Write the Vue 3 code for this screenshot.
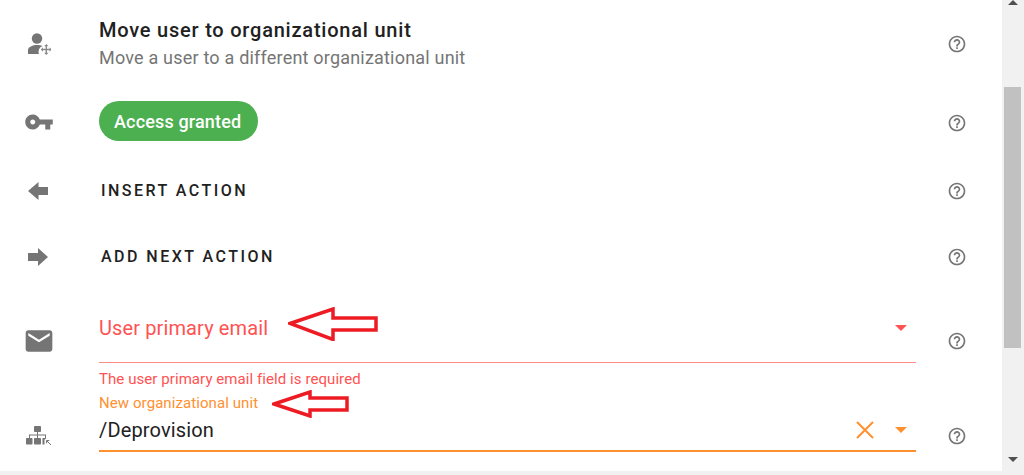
<script setup>
const helpPath = 'M11 18h2v-2h-2v2zm1-16C6.480 2 2 6.480 2 12s4.480 10 10 10 10-4.480 10-10S17.520 2 12 2zm0 18c-4.410 0-8-3.590-8-8s3.590-8 8-8 8 3.590 8 8-3.590 8-8 8zm0-14c-2.210 0-4 1.790-4 4h2c0-1.100.9-2 2-2s2 .9 2 2c0 2-3 1.750-3 5h2c0-2.250 3-2.500 3-5 0-2.210-1.790-4-4-4z'
</script>

<template>
  <div class="page">
    <main class="content">
      <section class="row r1">
        <div class="ic">
          <svg width="24" height="24" viewBox="0 0 24 24">
            <circle cx="10" cy="6.500" r="5.200" fill="#757575" />
            <path d="M1 22v-4C1 15 6 13 10 13c2.200 0 4 .4 5.500 1a6 6 0 0 0-3.500 8z" fill="#757575" />
            <path d="M19.300 12l2.200 2.200h-1.500v2.600h2.600v-1.500l2.200 2.200-2.200 2.200v-1.500H20v2.600h1.500l-2.200 2.200-2.200-2.200h1.500v-2.600H16v1.500l-2.200-2.200 2.200-2.200v1.500h2.600v-2.600h-1.500z" fill="#8a8a8a" />
          </svg>
        </div>
        <div class="main">
          <div class="title">Move user to organizational unit</div>
          <div class="sub">Move a user to a different organizational unit</div>
        </div>
        <div class="help"><svg width="20" height="20" viewBox="0 0 24 24"><path fill="#757575" :d="helpPath" /></svg></div>
      </section>

      <section class="row r2">
        <div class="ic key">
          <svg width="30" height="30" viewBox="0 0 24 24"><path fill="#757575" d="M12.650 10C11.830 7.670 9.610 6 7 6c-3.310 0-6 2.690-6 6s2.690 6 6 6c2.610 0 4.830-1.670 5.650-4H17v4h4v-4h2v-4H12.650zM7 14c-1.100 0-2-.9-2-2s.9-2 2-2 2 .9 2 2-.9 2-2 2z"/></svg>
        </div>
        <div class="main"><span class="chip">Access granted</span></div>
        <div class="help"><svg width="20" height="20" viewBox="0 0 24 24"><path fill="#757575" :d="helpPath" /></svg></div>
      </section>

      <section class="row r3">
        <div class="ic arr">
          <svg width="24" height="24" viewBox="0 0 24 24"><path fill="#757575" d="M2 12L12.500 3v5H22v8h-9.500v5z"/></svg>
        </div>
        <div class="main"><span class="btn">INSERT ACTION</span></div>
        <div class="help"><svg width="20" height="20" viewBox="0 0 24 24"><path fill="#757575" :d="helpPath" /></svg></div>
      </section>

      <section class="row r4">
        <div class="ic arr">
          <svg width="24" height="24" viewBox="0 0 24 24"><path fill="#757575" d="M22 12L12 3v5H2v8h10v5z"/></svg>
        </div>
        <div class="main"><span class="btn">ADD NEXT ACTION</span></div>
        <div class="help"><svg width="20" height="20" viewBox="0 0 24 24"><path fill="#757575" :d="helpPath" /></svg></div>
      </section>

      <section class="row r5">
        <div class="ic">
          <svg width="32" height="32" viewBox="0 0 24 24"><path fill="#757575" d="M20 4H4c-1.100 0-2 .9-2 2v12c0 1.100.9 2 2 2h16c1.100 0 2-.9 2-2V6c0-1.100-.9-2-2-2zm0 4l-8 5-8-5V6l8 5 8-5v2z"/></svg>
        </div>
        <div class="main top">
          <div class="field err">
            <span class="ph">User primary email</span>
            <span class="caret"></span>
          </div>
          <div class="msg">The user primary email field is required</div>
        </div>
        <div class="help"><svg width="20" height="20" viewBox="0 0 24 24"><path fill="#757575" :d="helpPath" /></svg></div>
      </section>

      <section class="row r6">
        <div class="ic">
          <svg width="26" height="20" viewBox="0 0 26 20">
            <g fill="#757575">
              <rect x="8" y="0" width="7" height="6" rx=".8" />
              <rect x="11" y="6" width="1" height="3" />
              <rect x="3" y="8.500" width="17" height="1" />
              <rect x="3" y="9" width="1" height="3" />
              <rect x="11" y="9" width="1" height="3" />
              <rect x="19" y="9" width="1" height="3" />
              <rect x="0" y="12" width="6.500" height="6.500" rx=".8" />
              <rect x="8" y="12" width="7" height="6.500" rx=".8" />
              <path d="M16.500 18.500V12h4l-2 1.800v4.700z" />
            </g>
            <path d="M20.500 14.500v2.800M20.500 14.500h2.800M20.800 14.800l4.200 4.200" stroke="#757575" stroke-width="1" fill="none" />
          </svg>
        </div>
        <div class="main top">
          <div class="lbl">New organizational unit</div>
          <div class="field ok">
            <span class="val">/Deprovision</span>
            <svg class="x" width="18" height="18" viewBox="0 0 18 18"><path d="M1 1l16 16M17 1L1 17" stroke="#ff9030" stroke-width="2" fill="none" /></svg>
            <span class="caret"></span>
          </div>
        </div>
        <div class="help"><svg width="20" height="20" viewBox="0 0 24 24"><path fill="#757575" :d="helpPath" /></svg></div>
      </section>

      <svg class="arrow a1" width="92" height="34" viewBox="0 0 92 34"><path d="M2 16.500L45 2v9h43v12H45v9.500z" fill="none" stroke="#ed1c24" stroke-width="3.500" /></svg>
      <svg class="arrow a2" width="78" height="28" viewBox="0 0 78 28"><path d="M2 14L38 2v6h37v12H38v6z" fill="none" stroke="#ed1c24" stroke-width="3.500" /></svg>
    </main>

    <aside class="sb">
      <span class="up"></span>
      <div class="thumb"></div>
      <span class="down"></span>
    </aside>
  </div>
  <div class="strip"></div>
</template>

<style>
html, body { margin: 0; background: #fff; overflow: hidden; }
</style>

<style scoped>
.page { display: flex; height: 471px; font-family: Roboto, "Liberation Sans", sans-serif; }
.content { position: relative; flex: 1; min-width: 0; overflow: hidden; }
.row { display: grid; grid-template-columns: 99px 817px 81px; align-items: center; }
.ic { display: flex; justify-content: center; width: 78px; }
.key { margin-bottom: 2px; }
.arr { width: 76px; }
.help { display: flex; justify-content: center; width: 81px; }
.top { align-self: start; }
.r1 { height: 88px; }
.r2 { height: 70px; }
.r3 { height: 66px; }
.r4 { height: 66px; }
.r5 { height: 102px; }
.r6 { height: 88px; }
.title { font-size: 20px; font-weight: 500; line-height: 28px; letter-spacing: .78px; color: #212121; }
.sub { font-size: 18px; line-height: 28px; letter-spacing: .2px; color: #757575; }
.chip { display: inline-flex; align-items: center; height: 40px; margin-bottom: 4px; padding: 0 17px 0 15px; border-radius: 20px; background: #4caf50; color: #fff; font-size: 18px; font-weight: 500; letter-spacing: .15px; }
.btn { display: block; margin-bottom: 2px; padding-left: 2px; font-size: 16px; font-weight: 500; letter-spacing: 2.47px; color: #212121; }
.field { display: flex; align-items: center; }
.err { height: 68px; margin-top: 4px; border-bottom: 1px solid #ff8a8a; color: #ff5252; }
.ok { height: 36px; padding-bottom: 2px; border-bottom: 2px solid #ff9030; color: #ff9030; }
.ph { flex: 1; font-size: 20px; letter-spacing: .12px; }
.val { flex: 1; font-size: 20px; letter-spacing: .15px; color: #212121; }
.caret { width: 0; height: 0; margin-right: 9px; border-left: 6px solid transparent; border-right: 6px solid transparent; border-top: 6px solid currentColor; }
.x { margin-right: 21px; }
.msg { margin-top: 7px; font-size: 15px; line-height: 18px; color: #ff5252; letter-spacing: .07px; }
.lbl { margin-top: 2px; font-size: 15px; line-height: 18px; color: #ff9030; letter-spacing: .08px; }
.arrow { position: absolute; }
.a1 { left: 288px; top: 307px; }
.a2 { left: 272px; top: 390px; }
.sb { width: 22px; padding-right: 2px; box-sizing: border-box; display: flex; flex-direction: column; align-items: center; background: #f1f1f1; position: relative; }
.up { width: 0; height: 0; margin-left: 1px; border-left: 5px solid transparent; border-right: 5px solid transparent; border-bottom: 5px solid #505050; }
.thumb { margin: 82px 0 0; width: 17px; height: 261px; background: #c1c1c1; }
.down { margin-top: auto; margin-bottom: 9px; margin-left: 2px; width: 0; height: 0; border-left: 5px solid transparent; border-right: 5px solid transparent; border-top: 5px solid #505050; }
.strip { height: 4px; background: #f1f1f1; }
</style>
